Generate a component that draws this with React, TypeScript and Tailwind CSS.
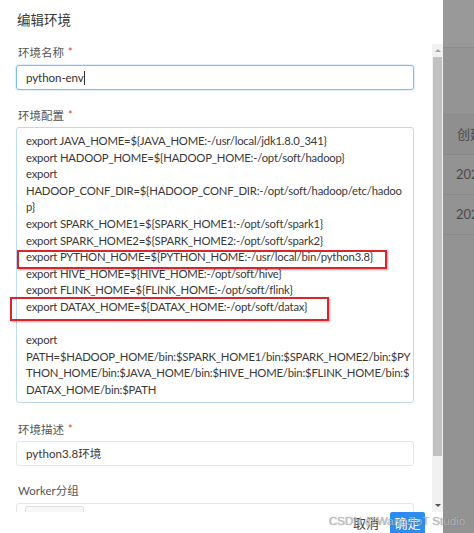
import React from "react";

const lines = [
  "export JAVA_HOME=${JAVA_HOME:-/usr/local/jdk1.8.0_341}",
  "export HADOOP_HOME=${HADOOP_HOME:-/opt/soft/hadoop}",
  "export",
  "HADOOP_CONF_DIR=${HADOOP_CONF_DIR:-/opt/soft/hadoop/etc/hadoo",
  "p}",
  "export SPARK_HOME1=${SPARK_HOME1:-/opt/soft/spark1}",
  "export SPARK_HOME2=${SPARK_HOME2:-/opt/soft/spark2}",
  "export PYTHON_HOME=${PYTHON_HOME:-/usr/local/bin/python3.8}",
  "export HIVE_HOME=${HIVE_HOME:-/opt/soft/hive}",
  "export FLINK_HOME=${FLINK_HOME:-/opt/soft/flink}",
  "export DATAX_HOME=${DATAX_HOME:-/opt/soft/datax}",
  "",
  "export",
  "PATH=$HADOOP_HOME/bin:$SPARK_HOME1/bin:$SPARK_HOME2/bin:$PY",
  "THON_HOME/bin:$JAVA_HOME/bin:$HIVE_HOME/bin:$FLINK_HOME/bin:$",
  "DATAX_HOME/bin:$PATH",
];

const font = {
  fontFamily: 'Lato, "Noto Sans CJK SC", sans-serif',
};

function Label({ text, required }: { text: string; required?: boolean }) {
  return (
    <div className="h-[14px] text-[11.5px] leading-[14px] text-[#555] flex items-start pl-[2px]">
      <span>{text}</span>
      {required && <span className="text-[#ed4014] ml-[4px] text-[11px] leading-[12px]">*</span>}
    </div>
  );
}

export default function App() {
  return (
    <div className="relative w-[474px] h-[533px] flex overflow-hidden bg-white" style={font}>
      <div className="w-[445px] h-full flex flex-col relative bg-white">
        <div className="shrink-0 h-[44px] pl-[17px] pt-[10px] text-[13.5px] leading-[20px] text-[#3a3a3a]">编辑环境</div>
        <div className="shrink-0 h-[468px] flex">
          <div className="w-[432px] overflow-hidden pl-[16px] pr-[18px]">
            <div className="mt-[2px]">
              <Label text="环境名称" required />
            </div>
            <div className="mt-[5px] h-[25px] border border-[#7fbcf2] rounded-[3px] shadow-[0_0_0_1px_rgba(45,140,240,0.15)] flex items-center pl-[9px] text-[11.6px] tracking-[-0.1px] text-[#333]">
              python-env<span className="inline-block w-[1px] h-[14px] bg-[#333]" />
            </div>
            <div className="mt-[19px]">
              <Label text="环境配置" required />
            </div>
            <div className="relative mt-[4px] h-[276px] border border-[#bcd9f0] rounded-[3px] pt-[5px] pl-[9px] text-[11.3px] tracking-[-0.2px] leading-[16.6px] text-[#383838]">
              {lines.map((l, i) => (
                <div key={i} className="h-[16.6px] whitespace-pre">
                  {l}
                </div>
              ))}
              <div className="absolute left-[0px] top-[122px] w-[370px] h-[19px] border-2 border-[#d9252d] shadow-[1px_1px_2px_rgba(0,0,0,0.35)]" />
              <div className="absolute left-[-7px] top-[169px] w-[319px] h-[24px] border-2 border-[#d9252d] shadow-[1px_1px_2px_rgba(0,0,0,0.35)]" />
            </div>
            <div className="mt-[20px]">
              <Label text="环境描述" required />
            </div>
            <div className="mt-[4px] h-[25px] border border-[#e6e6e6] rounded-[3px] flex items-center pl-[9px] text-[11.6px] text-[#383838]">
              python3.8环境
            </div>
            <div className="mt-[18px]">
              <Label text="Worker分组" />
            </div>
            <div className="mt-[5px] h-[28px] border border-[#e6e6e6] rounded-[3px] pl-[8px] pt-[2px]">
              <div className="w-[59px] h-[20px] border border-[#e0e0e0] rounded-[2px] bg-[#f7f7f7]" />
            </div>
          </div>
          <div className="w-[11px] h-full bg-[#f1f1f1] flex flex-col">
            <div className="h-[13px] flex items-center justify-center">
              <div className="w-0 h-0 border-l-[3px] border-r-[3px] border-b-[3px] border-l-transparent border-r-transparent border-b-[#a3a3a3]" />
            </div>
            <div className="h-[399px] bg-[#c1c1c1] mx-[1px]" />
            <div className="flex-1" />
            <div className="h-[13px] flex items-center justify-center">
              <div className="w-0 h-0 border-l-[3px] border-r-[3px] border-t-[3px] border-l-transparent border-r-transparent border-t-[#505050]" />
            </div>
          </div>
        </div>
        <div className="flex-1 min-h-0 overflow-hidden flex justify-end items-start pr-[18px] gap-[11px]">
          <div className="text-[13px] leading-[20px] text-[#444] pt-[1px]">取消</div>
          <div className="w-[35px] h-[24px] bg-[#2d8cf0] rounded-[2px] text-white text-[13px] leading-[20px] text-center pt-[1px]">确定</div>
        </div>
      </div>
      <div className="flex-1 h-full flex flex-col bg-[#939393] text-[13px] text-[#4a4a4a]">
        <div className="h-[48px] bg-[#999999] border-b border-[#8a8a8a]" />
        <div className="h-[67px] bg-[#949494] border-b border-[#8a8a8a]" />
        <div className="h-[40px] bg-[#8f8f8f] border-b border-[#878787] flex items-center pl-[14px] whitespace-nowrap">创建时间</div>
        <div className="h-[40px] border-b border-[#8a8a8a] flex items-center pl-[13px] whitespace-nowrap">2022-</div>
        <div className="h-[40px] border-b border-[#8a8a8a] flex items-center pl-[13px] whitespace-nowrap">2022-</div>
        <div className="flex-1" />
      </div>
      <div
        className="absolute left-[329px] top-[512px] text-[11.6px] leading-[18px] text-[rgba(200,200,200,0.8)] whitespace-nowrap pointer-events-none [text-shadow:0_0_1px_rgba(90,90,90,0.7)]"
        style={{ fontFamily: '"Liberation Sans", sans-serif' }}
      >
        CSDN @WangJIoT Studio
      </div>
    </div>
  );
}
